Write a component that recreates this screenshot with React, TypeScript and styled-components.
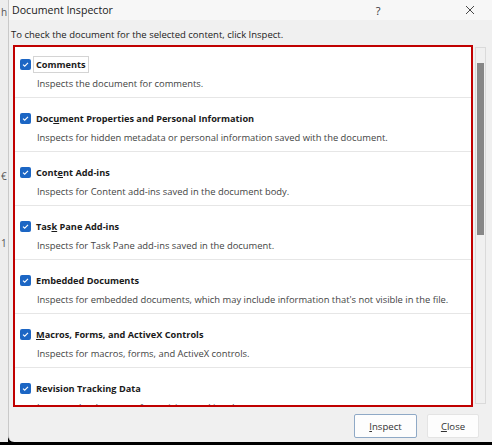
import React from "react";
import styled, { createGlobalStyle } from "styled-components";

const GlobalStyle = createGlobalStyle`
  html, body {
    margin: 0;
    padding: 0;
    background: #000;
  }
  body {
    font-family: "Open Sans", "Noto Sans", "Liberation Sans", sans-serif;
    color: #222;
  }
`;

const Screen = styled.div`
  display: flex;
  width: 492px;
  height: 442px;
  overflow: hidden;
`;

const BackStrip = styled.div`
  display: flex;
  flex-direction: column;
  width: 8px;
  background: #ededed;
  color: #555;
  font-size: 10px;
  overflow: hidden;
`;

const StripGlyph = styled.span<{ $top: number }>`
  display: block;
  margin-top: ${(p) => p.$top}px;
  line-height: 10px;
  padding-left: 1px;
`;

const Dialog = styled.div`
  flex: 1;
  display: flex;
  flex-direction: column;
  background: #f0f0f0;
  border-left: 1px solid #c9c9c9;
  border-bottom-left-radius: 6px;
`;

const TitleBar = styled.div`
  display: flex;
  align-items: center;
  height: 20px;
  padding: 0 0 0 3px;
  background: #f7f7f7;
  font-size: 10.6px;
  color: #202020;
`;

const Title = styled.span`
  flex: 1;
`;

const TitleButton = styled.span<{ $width: number; $gap?: number }>`
  display: flex;
  align-items: center;
  justify-content: center;
  width: ${(p) => p.$width}px;
  margin-right: ${(p) => p.$gap ?? 0}px;
  height: 20px;
  font-size: 11px;
  color: #333;
`;

const Body = styled.div`
  display: flex;
  flex-direction: column;
  padding: 0 5px 0 4px;
  flex: 1;
`;

const Instruction = styled.div`
  font-size: 9.5px;
  padding-top: 9px;
  margin-left: -2px;
  height: 16px;
  line-height: 11px;
  color: #222;
`;

const ListArea = styled.div`
  display: flex;
  height: 362px;
`;

const Frame = styled.div`
  flex: 1;
  border: 2px solid #c00000;
  background: #fff;
  overflow: hidden;
`;

const Scrollbar = styled.div`
  width: 11px;
  margin: 2px 1px 3px 2px;
  background: #f0f0f0;
  border: 1px solid #dadada;
  box-sizing: border-box;
  display: flex;
  justify-content: center;
  padding-top: 15px;
`;

const Thumb = styled.div`
  width: 7px;
  height: 172px;
  background: #878787;
`;

const Row = styled.div<{ $first?: boolean }>`
  padding: ${(p) => (p.$first ? 9 : 12)}px 0 6px 5px;
  border-bottom: 1px solid #e6e6e6;
`;

const TitleLine = styled.div`
  display: flex;
  align-items: center;
  gap: 4px;
  height: 16px;
`;

const Check = styled.svg`
  flex: none;
  width: 11px;
  height: 11px;
`;

const ItemTitle = styled.span<{ $focused?: boolean }>`
  font-size: 9.2px;
  font-weight: 700;
  color: #1a1a1a;
  padding: 1px 2px;
  margin-left: -2px;
  border: 1px solid ${(p) => (p.$focused ? "#d4d4d4" : "transparent")};
  line-height: 13px;
`;

const Desc = styled.div`
  font-size: 9.4px;
  color: #444;
  margin: 5px 0 0 17px;
  line-height: 14px;
  white-space: nowrap;
`;

const Footer = styled.div`
  display: flex;
  justify-content: flex-end;
  gap: 10px;
  padding: 7px 8px 0 0;
`;

const Button = styled.button<{ $default?: boolean }>`
  height: 24px;
  padding: 0;
  width: ${(p) => (p.$default ? 63 : 52)}px;
  font-family: inherit;
  font-size: 9.6px;
  color: #333;
  background: #fdfdfd;
  border: 1px solid ${(p) => (p.$default ? "#8fa9c6" : "#e4e4e4")};
  border-radius: 2px;
`;

const Key = styled.span`
  text-decoration: underline;
`;

const CheckIcon = () => (
  <Check viewBox="0 0 11 11">
    <rect x="0" y="0" width="11" height="11" rx="2" fill="#1c66c4" />
    <path d="M3 5.6 L4.7 7.2 L8 3.8" fill="none" stroke="#fff" strokeWidth="1.1" />
  </Check>
);

const CloseIcon = () => (
  <svg width="10" height="10" viewBox="0 0 10 10">
    <path d="M1 1 L9 9 M9 1 L1 9" stroke="#333" strokeWidth="0.9" />
  </svg>
);

type Item = { title: React.ReactNode; desc: string };

const items: Item[] = [
  { title: "Comments", desc: "Inspects the document for comments." },
  {
    title: (
      <>
        Doc<Key>u</Key>ment Properties and Personal Information
      </>
    ),
    desc: "Inspects for hidden metadata or personal information saved with the document.",
  },
  {
    title: (
      <>
        Cont<Key>e</Key>nt Add-ins
      </>
    ),
    desc: "Inspects for Content add-ins saved in the document body.",
  },
  {
    title: (
      <>
        Tas<Key>k</Key> Pane Add-ins
      </>
    ),
    desc: "Inspects for Task Pane add-ins saved in the document.",
  },
  {
    title: "Embedded Documents",
    desc: "Inspects for embedded documents, which may include information that's not visible in the file.",
  },
  {
    title: (
      <>
        <Key>M</Key>acros, Forms, and ActiveX Controls
      </>
    ),
    desc: "Inspects for macros, forms, and ActiveX controls.",
  },
  {
    title: "Revision Tracking Data",
    desc: "Inspects the document for revision tracking data.",
  },
];

export default function App() {
  return (
    <>
      <GlobalStyle />
      <Screen>
        <BackStrip>
          <StripGlyph $top={7}>h</StripGlyph>
          <StripGlyph $top={154}>€</StripGlyph>
          <StripGlyph $top={57}>1</StripGlyph>
        </BackStrip>
        <Dialog>
          <TitleBar>
            <Title>Document Inspector</Title>
            <TitleButton $width={30} $gap={55}>
              ?
            </TitleButton>
            <TitleButton $width={44}>
              <CloseIcon />
            </TitleButton>
          </TitleBar>
          <Body>
            <Instruction>To check the document for the selected content, click Inspect.</Instruction>
            <ListArea>
              <Frame>
                {items.map((it, i) => (
                  <Row key={i} $first={i === 0}>
                    <TitleLine>
                      <CheckIcon />
                      <ItemTitle $focused={i === 0}>{it.title}</ItemTitle>
                    </TitleLine>
                    <Desc>{it.desc}</Desc>
                  </Row>
                ))}
              </Frame>
              <Scrollbar>
                <Thumb />
              </Scrollbar>
            </ListArea>
            <Footer>
              <Button $default>
                <Key>I</Key>nspect
              </Button>
              <Button>
                <Key>C</Key>lose
              </Button>
            </Footer>
          </Body>
        </Dialog>
      </Screen>
    </>
  );
}
